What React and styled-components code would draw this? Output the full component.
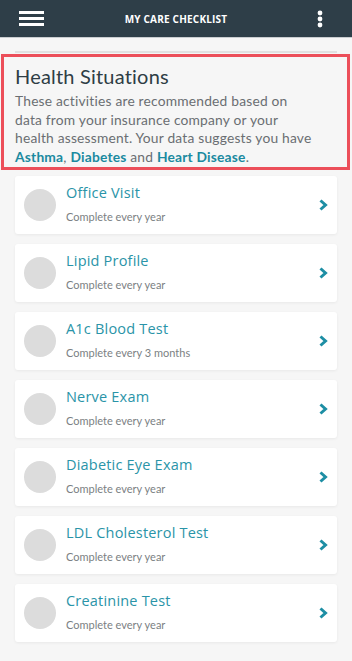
import React from 'react';
import styled, { createGlobalStyle } from 'styled-components';

const GlobalStyle = createGlobalStyle`
  html, body {
    margin: 0;
    padding: 0;
    background: #f6f6f6;
  }
  body {
    font-family: Lato, "Open Sans", sans-serif;
  }
`;

const items = [
  { id: 1, title: 'Office Visit', freq: 'Complete every year' },
  { id: 2, title: 'Lipid Profile', freq: 'Complete every year' },
  { id: 3, title: 'A1c Blood Test', freq: 'Complete every 3 months' },
  { id: 4, title: 'Nerve Exam', freq: 'Complete every year' },
  { id: 5, title: 'Diabetic Eye Exam', freq: 'Complete every year' },
  { id: 6, title: 'LDL Cholesterol Test', freq: 'Complete every year' },
  { id: 7, title: 'Creatinine Test', freq: 'Complete every year' },
];

const Hamburger = () => (
  <svg width="25" height="15" viewBox="0 0 25 15">
    <rect x="0" y="0" width="25" height="3" fill="#fff" />
    <rect x="0" y="6" width="25" height="3" fill="#fff" />
    <rect x="0" y="12" width="25" height="3" fill="#fff" />
  </svg>
);

const Dots = () => (
  <svg width="6" height="18" viewBox="0 0 6 18">
    <circle cx="3" cy="3" r="2.4" fill="#fff" />
    <circle cx="3" cy="9" r="2.4" fill="#fff" />
    <circle cx="3" cy="15" r="2.4" fill="#fff" />
  </svg>
);

const Chevron = () => (
  <svg width="9" height="12" viewBox="0 0 9 12">
    <path d="M1.5 1.5 L6.5 6 L1.5 10.5" fill="none" stroke="#1d8ea4" strokeWidth="3" strokeLinejoin="miter" />
  </svg>
);

const App = () => {
  return (
    <Page>
      <GlobalStyle />
      <Header>
        <IconButton><Hamburger /></IconButton>
        <HeaderTitle>MY CARE CHECKLIST</HeaderTitle>
        <IconButton $right><Dots /></IconButton>
      </Header>
      <Divider />
      <Highlight>
        <SectionTitle>Health Situations</SectionTitle>
        <SectionText>
          These activities are recommended based on
          <br />
          data from your insurance company or your
          <br />
          health assessment. Your data suggests you have
          <br />
          <Condition>Asthma</Condition>, <Condition>Diabetes</Condition> and{' '}
          <Condition>Heart Disease</Condition>.
        </SectionText>
      </Highlight>
      <List>
        {items.map((item) => (
          <Card key={item.id}>
            <Status />
            <CardBody>
              <CardTitle>{item.title}</CardTitle>
              <CardSub>{item.freq}</CardSub>
            </CardBody>
            <Chevron />
          </Card>
        ))}
      </List>
    </Page>
  );
};

export default App;

const Page = styled.div`
  width: 352px;
  min-height: 661px;
  background: #f6f6f6;
`;

const Header = styled.header`
  height: 37px;
  background: #2e3e48;
  border-bottom: 1px solid #c9cdd0;
  display: grid;
  grid-template-columns: 1fr auto 1fr;
  align-items: center;
  padding: 0 19px;
`;

const IconButton = styled.div`
  display: flex;
  align-items: center;
  justify-content: ${(p) => (p.$right ? 'flex-end' : 'flex-start')};
  padding-right: ${(p) => (p.$right ? '10px' : '0')};
  height: 100%;
`;

const HeaderTitle = styled.div`
  color: #fff;
  font-family: "Open Sans", sans-serif;
  font-weight: 700;
  font-size: 10px;
  letter-spacing: 0.2px;
`;

const Divider = styled.div`
  height: 2px;
  background: #e1e1e1;
  margin: 13px 15px 0;
`;

const Highlight = styled.section`
  margin: 1px 2px 0 1px;
  border: 3px solid #ec4f5a;
  padding: 7px 12px 1px 11px;
`;

const SectionTitle = styled.h2`
  margin: 0 0 4px;
  font-family: Lato, sans-serif;
  font-weight: 400;
  font-size: 20px;
  line-height: 24px;
  color: #2e3d45;
  letter-spacing: 0.2px;
`;

const SectionText = styled.p`
  margin: 0;
  font-size: 13.8px;
  line-height: 18.5px;
  color: #6a6e72;
  letter-spacing: 0.2px;
  white-space: nowrap;
`;

const Condition = styled.span`
  color: #1b8aa0;
  font-weight: 700;
`;

const List = styled.div`
  display: flex;
  flex-direction: column;
  gap: 10px;
  padding: 6px 15px 20px;
`;

const Card = styled.div`
  height: 58px;
  background: #fff;
  border-radius: 3px;
  box-shadow: 0 1px 3px rgba(0, 0, 0, 0.06);
  display: flex;
  align-items: center;
  padding: 0 9px;
`;

const Status = styled.div`
  width: 32px;
  height: 32px;
  border-radius: 50%;
  background: #dcdcdc;
  flex-shrink: 0;
`;

const CardBody = styled.div`
  flex: 1;
  margin-left: 10px;
  display: flex;
  flex-direction: column;
  gap: 8px;
  margin-top: -3px;
`;

const CardTitle = styled.div`
  font-family: "Open Sans", sans-serif;
  font-size: 14.5px;
  line-height: 18px;
  color: #2a94a8;
  letter-spacing: 0.2px;
`;

const CardSub = styled.div`
  font-family: Lato, sans-serif;
  font-size: 11px;
  line-height: 13px;
  color: #7b7f83;
  letter-spacing: 0;
`;
